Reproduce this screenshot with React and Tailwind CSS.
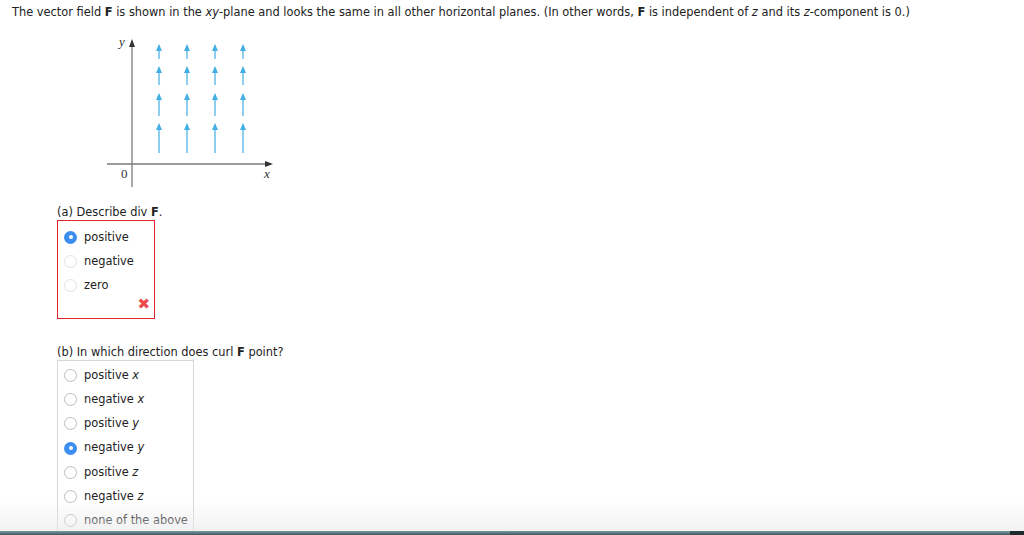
import React from 'react';

const Radio = ({ checked, faint }) =>
    checked ? (
        <span className="w-[13px] h-[13px] rounded-full bg-[#3b8ef0] flex items-center justify-center shrink-0">
            <span className="w-[4px] h-[4px] rounded-full bg-white" />
        </span>
    ) : (
        <span className={`w-[13px] h-[13px] rounded-full border bg-white shrink-0 ${faint ? 'border-[#e2e2e2]' : 'border-[#bdbdbd]'}`} />
    );

const Option = ({ checked, faint, children }) => (
    <div className="flex items-center h-[24.3px] pl-[6px] whitespace-nowrap">
        <Radio checked={checked} faint={faint} />
        <span className="ml-[7px]">{children}</span>
    </div>
);

const VectorField = () => {
    const cols = [159, 187, 215, 243];
    const rows = [
        [44, 59],
        [66, 85],
        [93, 116],
        [123, 153],
    ];
    return (
        <svg width="180" height="160" viewBox="100 30 180 160" className="block">
            <line x1="132" y1="44" x2="132" y2="187" stroke="#7a7a7a" strokeWidth="1.3" />
            <polygon points="132,39 129,47 135,47" fill="#333" />
            <line x1="107" y1="164" x2="268" y2="164" stroke="#7a7a7a" strokeWidth="1.3" />
            <polygon points="273,164 265,161 265,167" fill="#333" />
            <text x="119" y="46" fontFamily="'Liberation Serif', serif" fontStyle="italic" fontSize="13" fill="#333">y</text>
            <text x="121" y="178" fontFamily="'Liberation Serif', serif" fontSize="13" fill="#333">0</text>
            <text x="264" y="178" fontFamily="'Liberation Serif', serif" fontStyle="italic" fontSize="13" fill="#333">x</text>
            {cols.map((x) =>
                rows.map(([t, b]) => (
                    <g key={`${x}-${t}`}>
                        <line x1={x} y1={t + 4} x2={x} y2={b} stroke="#41aee4" strokeWidth="1.2" />
                        <polygon points={`${x},${t} ${x - 3},${t + 7} ${x + 3},${t + 7}`} fill="#41aee4" />
                    </g>
                ))
            )}
        </svg>
    );
};

export default function App() {
    return (
        <div className="relative w-[1024px] h-[535px] overflow-hidden bg-white text-[11.4px] text-[#222] font-['DejaVu_Sans','Verdana',sans-serif]">
            <div className="pl-[12px] pt-[4px] leading-[16px] whitespace-nowrap">
                The vector field <b>F</b> is shown in the <i>xy</i>-plane and looks the same in all other horizontal planes. (In other words, <b>F</b> is independent of <i>z</i> and its <i>z</i>-component is 0.)
            </div>

            <div className="ml-[100px] mt-[10px]">
                <VectorField />
            </div>

            <div className="ml-[57px] mt-[14px]">
                <div className="leading-[16px]">(a) Describe div <b>F</b>.</div>
                <div className="w-[98px] h-[99px] border border-[#e0262a] pt-[4px] relative">
                    <Option checked>positive</Option>
                    <Option faint>negative</Option>
                    <Option faint>zero</Option>
                    <span className="absolute right-[4px] bottom-[6px] text-[#ec4a4f] text-[15px] font-bold leading-none">✖</span>
                </div>
            </div>

            <div className="ml-[57px] mt-[25px]">
                <div className="leading-[16px]">(b) In which direction does curl <b>F</b> point?</div>
                <div className="w-[137px] border border-[#d6d6d6] pt-[2px] pb-[10px]">
                    <Option>positive <i>x</i></Option>
                    <Option>negative <i>x</i></Option>
                    <Option>positive <i>y</i></Option>
                    <Option checked>negative <i>y</i></Option>
                    <Option>positive <i>z</i></Option>
                    <Option>negative <i>z</i></Option>
                    <Option>none of the above</Option>
                </div>
            </div>

            <div className="absolute left-0 right-0 bottom-[4px] h-[30px] bg-gradient-to-b from-white/0 to-[#e8e8e8]/60 pointer-events-none" />
            <div className="absolute left-0 right-0 bottom-0 h-[4px] bg-gradient-to-b from-[#7d9aa0] to-[#3e5a60]" />
            <div className="absolute right-0 bottom-0 h-[4px] w-[14px] bg-[#1d2a2d]" />
        </div>
    );
}
